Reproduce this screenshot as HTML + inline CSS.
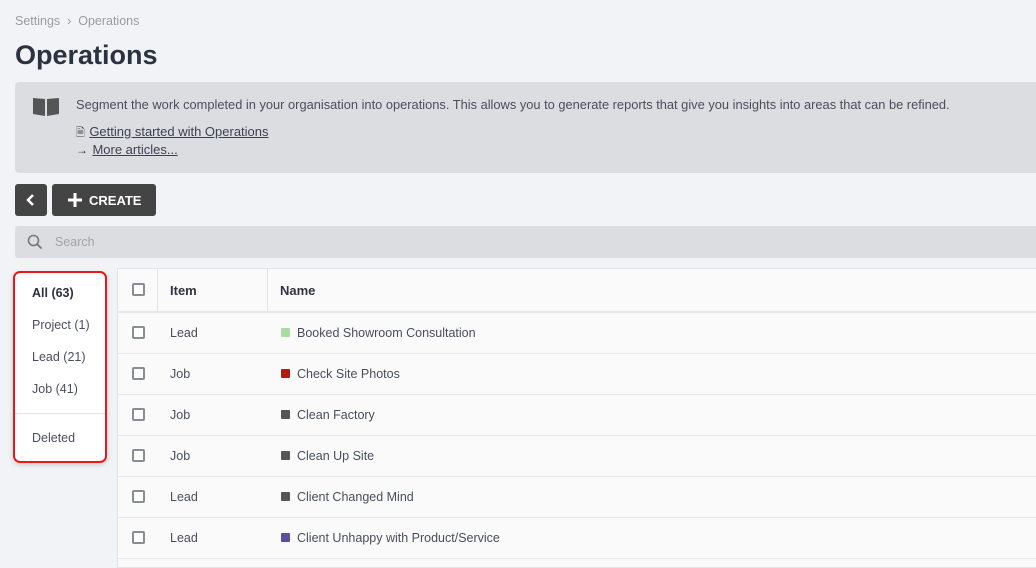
<!DOCTYPE html>
<html><head><style>
*{box-sizing:border-box;margin:0;padding:0}
body{width:1036px;height:560px;overflow:hidden;background:#f2f3f7;font-family:"Liberation Sans",sans-serif;color:#2e3440;position:relative}
.a{position:absolute}
.bc{left:15px;top:14px;font-size:12.5px;color:#9a9ca4}
h1{position:absolute;left:15px;top:40px;font-size:27px;font-weight:bold;color:#2b3240}
.info{left:15px;top:82px;width:1030px;height:91px;background:#dcdde1;border-radius:4px}
.info p{position:absolute;left:61px;top:15px;font-size:12.85px;color:#4a4e58;white-space:nowrap}
.lnk{font-size:13px;color:#3d4250;text-decoration:underline;white-space:nowrap}
.btn{background:#444;border-radius:3px;color:#fff;font-weight:bold;font-size:13px}
.search{left:15px;top:226px;width:1030px;height:32px;background:#dcdde1;border-radius:3px}
.side{left:13px;top:271px;width:94px;height:192px;background:#fff;border:2px solid #e8191d;border-radius:7px;box-shadow:0 2px 6px rgba(0,0,0,.15);font-size:12.5px;color:#4a4e60}
.side div{position:absolute;left:17px}
.tbl{left:117px;top:268px;width:930px;height:300px;background:#fafafa;border:1px solid #e3e3e6}
.row{position:absolute;left:0;width:100%;height:41px;border-bottom:1px solid #e6e6e9;font-size:12.5px;color:#4a4e5c}
.cb{position:absolute;left:14px;width:13px;height:13px;border:2px solid #8a8d96;border-radius:2px;background:#fff}
.it{position:absolute;left:52px}
.sq{position:absolute;left:163px;width:9px;height:9px;border-radius:1px}
.nm{position:absolute;left:179px}
</style></head><body>
<div class="a bc">Settings &nbsp;›&nbsp; Operations</div>
<h1>Operations</h1>
<div class="a info">
<svg class="a" style="left:17px;top:15px" width="28" height="20" viewBox="0 0 28 20"><path d="M1 1 L13 2 L13 19 L1 17Z M15 2 L27 1 L27 17 L15 19Z" fill="#555"/></svg>
<p>Segment the work completed in your organisation into operations. This allows you to generate reports that give you insights into areas that can be refined.</p>
<div class="a" style="left:61px;top:41px"><span style="font-size:11px;color:#444">🗎</span> <span class="lnk">Getting started with Operations</span></div>
<div class="a" style="left:61px;top:59px"><span style="font-size:12px;color:#333">→</span> <span class="lnk">More articles...</span></div>
</div>
<div class="a btn" style="left:15px;top:184px;width:32px;height:32px"><svg class="a" style="left:10px;top:9px" width="12" height="14"><path d="M8 2 L3 7 L8 12" stroke="#fff" stroke-width="2.5" fill="none"/></svg></div>
<div class="a btn" style="left:52px;top:184px;width:104px;height:32px"><svg class="a" style="left:16px;top:9px" width="14" height="14"><path d="M7 0V14M0 7H14" stroke="#fff" stroke-width="3"/></svg><span class="a" style="left:37px;top:9px">CREATE</span></div>
<div class="a search"><svg class="a" style="left:12px;top:8px" width="16" height="16"><circle cx="6.5" cy="6.5" r="5" stroke="#777" stroke-width="1.6" fill="none"/><path d="M10 10 L14.5 14.5" stroke="#777" stroke-width="1.8"/></svg><span class="a" style="left:40px;top:9px;font-size:12.5px;color:#a2a4ab">Search</span></div>
<div class="a side">
<div style="top:13px;font-weight:bold;color:#2b3040">All (63)</div>
<div style="top:45px">Project (1)</div>
<div style="top:77px">Lead (21)</div>
<div style="top:109px">Job (41)</div>
<span class="a" style="left:0;right:0;top:140px;border-top:1px solid #e3e3e6"></span>
<div style="top:158px">Deleted</div>
</div>
<div class="a tbl">
<div class="row" style="top:0;height:44px;border-bottom:2px solid #e6e6e9;font-weight:bold;color:#2e3440;font-size:13px">
<span class="cb" style="top:14px"></span>
<span class="a" style="left:39px;top:0;height:42px;border-left:1px solid #e3e3e6"></span>
<span class="it" style="top:14px">Item</span>
<span class="a" style="left:149px;top:0;height:42px;border-left:1px solid #e3e3e6"></span>
<span class="nm" style="left:162px;top:14px">Name</span></div>
<div class="row" style="top:44px"><span class="cb" style="top:13px"></span><span class="it" style="top:13px">Lead</span><span class="sq" style="top:15px;background:#a8dca0"></span><span class="nm" style="top:13px">Booked Showroom Consultation</span></div>
<div class="row" style="top:85px"><span class="cb" style="top:13px"></span><span class="it" style="top:13px">Job</span><span class="sq" style="top:15px;background:#b01c14"></span><span class="nm" style="top:13px">Check Site Photos</span></div>
<div class="row" style="top:126px"><span class="cb" style="top:13px"></span><span class="it" style="top:13px">Job</span><span class="sq" style="top:15px;background:#555"></span><span class="nm" style="top:13px">Clean Factory</span></div>
<div class="row" style="top:167px"><span class="cb" style="top:13px"></span><span class="it" style="top:13px">Job</span><span class="sq" style="top:15px;background:#555"></span><span class="nm" style="top:13px">Clean Up Site</span></div>
<div class="row" style="top:208px"><span class="cb" style="top:13px"></span><span class="it" style="top:13px">Lead</span><span class="sq" style="top:15px;background:#555"></span><span class="nm" style="top:13px">Client Changed Mind</span></div>
<div class="row" style="top:249px"><span class="cb" style="top:13px"></span><span class="it" style="top:13px">Lead</span><span class="sq" style="top:15px;background:#5e4ea0"></span><span class="nm" style="top:13px">Client Unhappy with Product/Service</span></div>
</div>
</body></html>
